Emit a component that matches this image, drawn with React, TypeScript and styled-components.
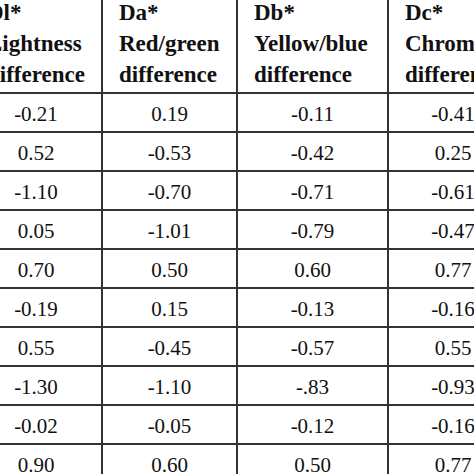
import React from 'react';
import styled, { createGlobalStyle } from 'styled-components';

const GlobalStyle = createGlobalStyle`
  html, body {
    margin: 0;
    padding: 0;
    background: #ffffff;
  }
`;

// the screenshot is a crop of a bigger table, so the frame clips it
const Frame = styled.div`
  width: 474px;
  height: 474px;
  overflow: hidden;
  background: #ffffff;
`;

const Table = styled.table`
  border-collapse: collapse;
  table-layout: fixed;
  width: 548px;
  margin-left: -31px;
  margin-top: -11px;
  font-family: 'Liberation Serif', 'Times New Roman', serif;
  color: #111111;
`;

const HeadCell = styled.th`
  border: 2px solid #333333;
  padding: 6px 8px 2px 16px;
  text-align: left;
  vertical-align: top;
  font-size: 23px;
  font-weight: 700;
  line-height: 31px;
  white-space: nowrap;
`;

const Row = styled.tr`
  height: 39px;
`;

const Cell = styled.td`
  border: 2px solid #333333;
  padding: 3px 0 0;
  text-align: center;
  vertical-align: middle;
  font-size: 21px;
  line-height: 24px;
`;

interface Column {
  symbol: string;
  name: string;
  width: number;
}

const columns: Column[] = [
  { symbol: 'Dl*', name: 'Lightness', width: 132 },
  { symbol: 'Da*', name: 'Red/green', width: 135 },
  { symbol: 'Db*', name: 'Yellow/blue', width: 151 },
  { symbol: 'Dc*', name: 'Chroma', width: 130 },
];

const rows: string[][] = [
  ['-0.21', '0.19', '-0.11', '-0.41'],
  ['0.52', '-0.53', '-0.42', '0.25'],
  ['-1.10', '-0.70', '-0.71', '-0.61'],
  ['0.05', '-1.01', '-0.79', '-0.47'],
  ['0.70', '0.50', '0.60', '0.77'],
  ['-0.19', '0.15', '-0.13', '-0.16'],
  ['0.55', '-0.45', '-0.57', '0.55'],
  ['-1.30', '-1.10', '-.83', '-0.93'],
  ['-0.02', '-0.05', '-0.12', '-0.16'],
  ['0.90', '0.60', '0.50', '0.77'],
];

const App: React.FC = () => {
  return (
    <>
      <GlobalStyle />
      <Frame>
        <Table>
          <colgroup>
            {columns.map((col) => (
              <col key={col.symbol} style={{ width: col.width }} />
            ))}
          </colgroup>
          <thead>
            <tr>
              {columns.map((col) => (
                <HeadCell key={col.symbol}>
                  {col.symbol}
                  <br />
                  {col.name}
                  <br />
                  difference
                </HeadCell>
              ))}
            </tr>
          </thead>
          <tbody>
            {rows.map((row, i) => (
              <Row key={i}>
                {row.map((value, j) => (
                  <Cell key={j}>{value}</Cell>
                ))}
              </Row>
            ))}
          </tbody>
        </Table>
      </Frame>
    </>
  );
};

export default App;
